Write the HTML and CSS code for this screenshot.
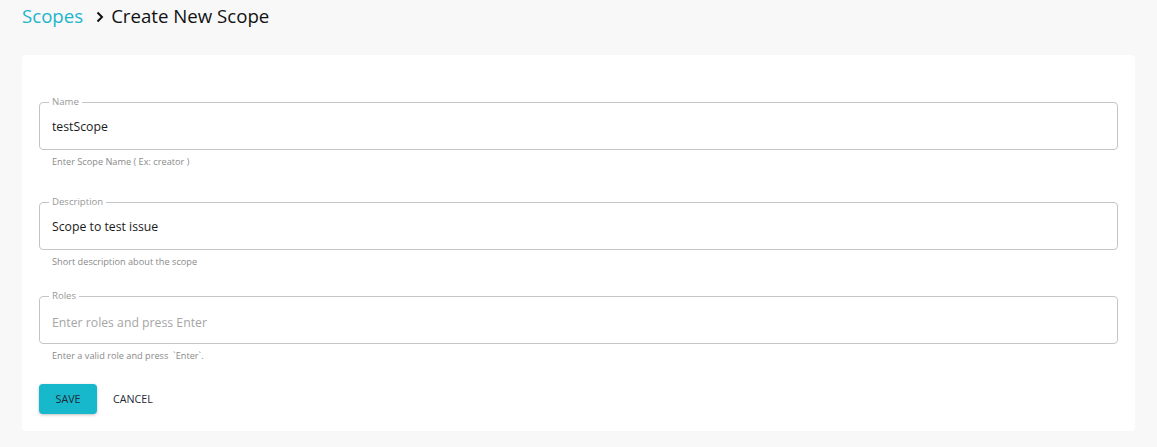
FILE: index.html
```html
<!DOCTYPE html>
<html>
<head>
<meta charset="utf-8">
<link rel="stylesheet" href="styles.css">
</head>
<body>
<header class="crumbs">
  <a class="crumb-link">Scopes</a>
  <svg class="chev" width="8" height="12" viewBox="0 0 8 12"><path d="M1.5 1.5 L6 6 L1.5 10.5" fill="none" stroke="#111" stroke-width="2"/></svg>
  <span class="crumb-current">Create New Scope</span>
</header>
<main class="card">
  <div class="group g1">
    <fieldset class="field">
      <legend>Name</legend>
      <div class="value">testScope</div>
    </fieldset>
    <div class="helper">Enter Scope Name ( Ex: creator )</div>
  </div>
  <div class="group g2">
    <fieldset class="field">
      <legend>Description</legend>
      <div class="value">Scope to test issue</div>
    </fieldset>
    <div class="helper">Short description about the scope</div>
  </div>
  <div class="group g3">
    <fieldset class="field">
      <legend>Roles</legend>
      <div class="value placeholder">Enter roles and press Enter</div>
    </fieldset>
    <div class="helper">Enter a valid role and press &nbsp;`Enter`.</div>
  </div>
  <div class="actions">
    <button class="btn btn-save">SAVE</button>
    <button class="btn btn-cancel">CANCEL</button>
  </div>
</main>
</body>
</html>
```
FILE: styles.css
```css
html, body {
  margin: 0;
  padding: 0;
  background: #f8f8f8;
  font-family: "Open Sans", "Noto Sans", sans-serif;
  color: #1a1a1a;
}
.crumbs {
  height: 55px;
  display: flex;
  align-items: flex-start;
  padding: 3px 0 0 22px;
  box-sizing: border-box;
  font-size: 18.65px;
  line-height: 26px;
}
.crumb-link {
  color: #1cb5cb;
}
.chev {
  margin: 8px 7px 0 13px;
}
.crumb-current {
  color: #111;
}
.card {
  margin: 0 22px;
  background: #fff;
  border-radius: 4px;
  padding: 41px 17px 17px;
}
.field {
  margin: 0;
  border: 1px solid #c4c4c4;
  border-radius: 4px;
  padding: 0 12px 2px;
  min-width: 0;
}
.field legend {
  font-size: 9.6px;
  line-height: 12px;
  padding: 0 3px;
  margin-left: -3px;
  color: #999;
}
.value {
  box-sizing: border-box;
  height: 39px;
  line-height: 37px;
  padding-bottom: 2px;
  font-size: 12.25px;
  color: #1a1a1a;
}
.value.placeholder {
  color: #a6a6a6;
  padding: 3px 0 0;
  line-height: 36px;
}
.helper {
  margin: 5px 0 0 13px;
  font-size: 9.2px;
  line-height: 14px;
  color: #8a8a8a;
}
.g1 { margin-bottom: 27px; }
.g2 { margin-bottom: 21px; }
.g3 { margin-bottom: 21px; }
.actions {
  display: flex;
  align-items: center;
  gap: 8px;
}
.btn {
  font-family: inherit;
  font-size: 10.7px;
  border: 0;
  border-radius: 4px;
  height: 30px;
  padding: 0 8px;
  background: transparent;
  color: #1f2a36;
}
.btn-save {
  width: 58px;
  background: #17b7cc;
  box-shadow: 0 1px 3px rgba(0,0,0,0.25);
}
```
